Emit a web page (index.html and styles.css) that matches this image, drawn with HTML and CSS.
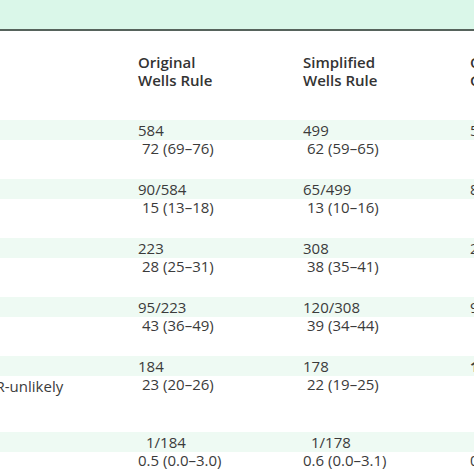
FILE: index.html
```html
<!DOCTYPE html>
<html>
<head>
<meta charset="utf-8">
<link rel="stylesheet" href="styles.css">
</head>
<body>
<div class="page">
  <div class="topband"></div>
  <div class="head row">
    <div class="cell"></div>
    <div class="cell">Original<br>Wells Rule</div>
    <div class="cell">Simplified<br>Wells Rule</div>
    <div class="cell">Original<br>Geneva Score</div>
  </div>
  <div class="body">
    <div class="group">
      <div class="row shade"><div class="cell"></div><div class="cell">584</div><div class="cell">499</div><div class="cell">564</div></div>
      <div class="row line"><div class="cell"></div><div class="cell ind">72 (69–76)</div><div class="cell ind">62 (59–65)</div><div class="cell ind">70 (67–73)</div></div>
    </div>
    <div class="group">
      <div class="row shade"><div class="cell"></div><div class="cell">90/584</div><div class="cell">65/499</div><div class="cell">83/564</div></div>
      <div class="row line"><div class="cell"></div><div class="cell ind">15 (13–18)</div><div class="cell ind">13 (10–16)</div><div class="cell ind">15 (12–18)</div></div>
    </div>
    <div class="group">
      <div class="row shade"><div class="cell"></div><div class="cell">223</div><div class="cell">308</div><div class="cell">243</div></div>
      <div class="row line"><div class="cell"></div><div class="cell ind">28 (25–31)</div><div class="cell ind">38 (35–41)</div><div class="cell ind">30 (27–33)</div></div>
    </div>
    <div class="group">
      <div class="row shade"><div class="cell"></div><div class="cell">95/223</div><div class="cell">120/308</div><div class="cell">92/243</div></div>
      <div class="row line"><div class="cell"></div><div class="cell ind">43 (36–49)</div><div class="cell ind">39 (34–44)</div><div class="cell ind">38 (32–44)</div></div>
    </div>
    <div class="group tall">
      <div class="row shade"><div class="cell"></div><div class="cell">184</div><div class="cell">178</div><div class="cell bold">169</div></div>
      <div class="row line"><div class="cell label">OWR-unlikely</div><div class="cell ind">23 (20–26)</div><div class="cell ind">22 (19–25)</div><div class="cell ind">21 (18–24)</div></div>
    </div>
    <div class="group">
      <div class="row shade"><div class="cell"></div><div class="cell ind2">1/184</div><div class="cell ind2">1/178</div><div class="cell ind2">5/169</div></div>
      <div class="row line"><div class="cell"></div><div class="cell">0.5 (0.0–3.0)</div><div class="cell">0.6 (0.0–3.1)</div><div class="cell">0.0 (1.0–6.8)</div></div>
    </div>
  </div>
</div>
</body>
</html>
```
FILE: styles.css
```css
html, body {
  margin: 0;
  padding: 0;
  background: #ffffff;
}
body {
  width: 474px;
  height: 474px;
  overflow: hidden;
  font-family: "Open Sans", "Noto Sans", sans-serif;
  font-size: 15px;
  color: #3b3b3b;
}
.page {
  width: 474px;
  overflow: hidden;
}
.topband {
  height: 29px;
  background: #daf7e9;
  border-bottom: 2px solid #56635c;
}
.row {
  display: grid;
  grid-template-columns: 138px 165px 167px 165px;
  white-space: nowrap;
}
.head {
  margin-top: 22px;
  line-height: 18px;
  font-weight: 600;
  color: #333333;
}
.body {
  margin-top: 31px;
}
.group {
  margin-bottom: 21px;
}
.group.tall {
  margin-bottom: 38px;
}
.shade {
  background: #eefaf3;
  height: 20px;
  line-height: 20px;
}
.line {
  height: 18px;
  line-height: 16px;
}
.ind {
  padding-left: 4px;
}
.ind2 {
  padding-left: 8px;
}
.bold {
  font-weight: 700;
}
.label {
  margin-left: -30px;
  padding-top: 2px;
}
```
